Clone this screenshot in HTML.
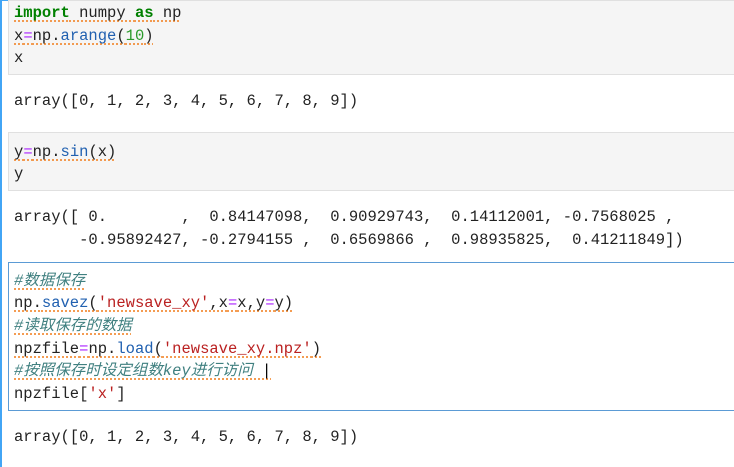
<!DOCTYPE html>
<html><head><meta charset="utf-8"><style>
body{margin:0;width:734px;height:467px;overflow:hidden;background:#fff;position:relative;font-family:"Liberation Mono","Noto Sans CJK SC",monospace;font-size:15.5px;color:#222}
.bar{position:absolute;left:0;top:0;width:2px;height:467px;background:#42a5f5}
.top{position:absolute;left:0;top:0;width:734px;height:1px;background:#42a5f5}
.cell{position:absolute;left:8px;right:-2px;background:#f5f5f5;border:1px solid #e0e0e0}
.sel{background:#fff;border:1px solid #5b9bd5;border-right:none}
.l{position:absolute;left:14px;white-space:pre;line-height:20px}
.u{text-decoration:underline dotted #f08020;text-underline-offset:4px}
.k{color:#008000;font-weight:bold}.o{color:#aa22ff}.f{color:#2060b0}.n{color:#2a9a2a}.s{color:#ba2121}
.c{color:#408080;font-style:italic}
</style></head><body>
<div class="top"></div><div class="bar"></div>
<div class="cell" style="top:0;height:73px"></div>
<div class="cell" style="top:132px;height:57px"></div>
<div class="cell sel" style="top:262px;height:147px"></div>
<div class="l u" style="top:3px"><span class="k">import</span> numpy <span class="k">as</span> np</div>
<div class="l u" style="top:26px">x<span class="o">=</span>np.<span class="f">arange</span>(<span class="n">10</span>)</div>
<div class="l" style="top:48px">x</div>
<div class="l" style="top:91px">array([0, 1, 2, 3, 4, 5, 6, 7, 8, 9])</div>
<div class="l u" style="top:142px">y<span class="o">=</span>np.<span class="f">sin</span>(x)</div>
<div class="l" style="top:164px">y</div>
<div class="l" style="top:207px">array([ 0.        ,  0.84147098,  0.90929743,  0.14112001, -0.7568025 ,</div>
<div class="l" style="top:230px">       -0.95892427, -0.2794155 ,  0.6569866 ,  0.98935825,  0.41211849])</div>
<div class="l c u" style="top:271px">#数据保存</div>
<div class="l u" style="top:293px">np.<span class="f">savez</span>(<span class="s">'newsave_xy'</span>,x<span class="o">=</span>x,y<span class="o">=</span>y)</div>
<div class="l c u" style="top:316px">#读取保存的数据</div>
<div class="l u" style="top:339px">npzfile<span class="o">=</span>np.<span class="f">load</span>(<span class="s">'newsave_xy.npz'</span>)</div>
<div class="l c u" style="top:361px">#按照保存时设定组数key进行访问 <span style="font-style:normal;color:#000">|</span></div>
<div class="l" style="top:384px">npzfile[<span class="s">'x'</span>]</div>
<div class="l" style="top:427px">array([0, 1, 2, 3, 4, 5, 6, 7, 8, 9])</div>
</body></html>
